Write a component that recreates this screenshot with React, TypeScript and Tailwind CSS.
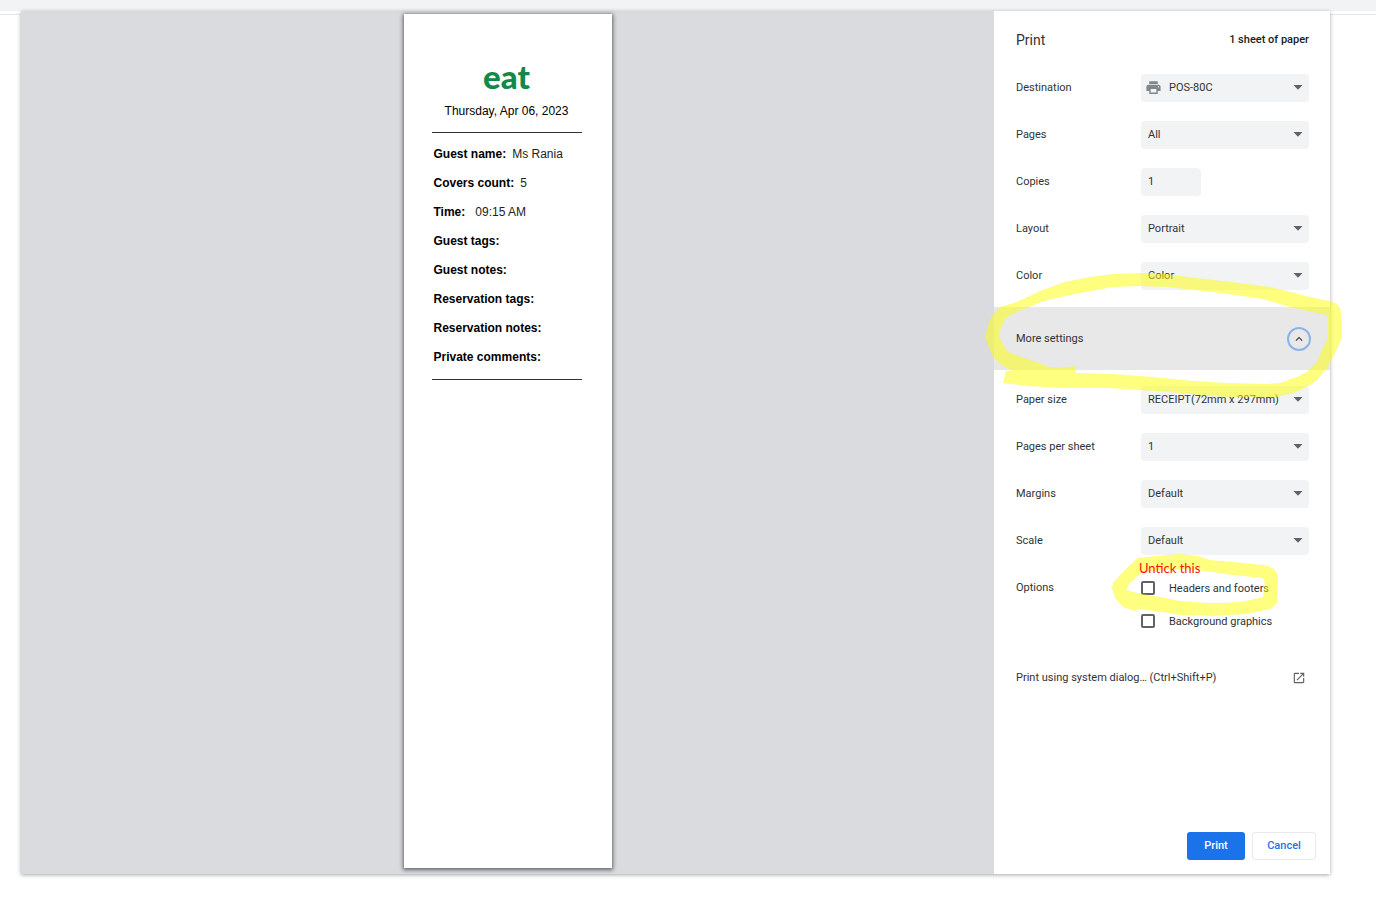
import { useState, type ReactNode } from "react";
import { MdExpandLess, MdExpandMore, MdOpenInNew, MdPrint } from "react-icons/md";

interface SelectRowProps {
  id: string;
  label: string;
  options: string[];
  icon?: ReactNode;
}

const RECEIPT_FIELDS = [
  { label: "Guest name:", value: "Ms Rania" },
  { label: "Covers count:", value: "5" },
  { label: "Time:", value: "09:15 AM", wide: true },
  { label: "Guest tags:" },
  { label: "Guest notes:" },
  { label: "Reservation tags:" },
  { label: "Reservation notes:" },
  { label: "Private comments:" },
];

function Row({ id, label, children }: { id: string; label: string; children: ReactNode }) {
  return (
    <div className="flex h-[47px] items-center pl-[22px] pr-[21px]">
      <label htmlFor={id} className="w-[125px] shrink-0 pt-0.5">{label}</label>
      {children}
    </div>
  );
}

function SelectRow({ id, label, options, icon }: SelectRowProps) {
  return (
    <Row id={id} label={label}>
      <div className="relative min-w-0 flex-1">
        <select
          id={id}
          className={`block h-7 w-full appearance-none rounded-sm bg-[#f1f3f4] pr-[27px] pt-0.5 ${icon ? "pl-7" : "pl-[7px]"}`}
        >
          {options.map((o) => (
            <option key={o}>{o}</option>
          ))}
        </select>
        {icon && <span className="pointer-events-none absolute left-1 top-[5px]">{icon}</span>}
        <svg viewBox="0 0 10 5" className="pointer-events-none absolute right-1.5 top-[11px] h-[5px] w-[10px]" fill="#5f6368">
          <path d="M.5 0h9L5 4.8z" />
        </svg>
      </div>
    </Row>
  );
}

function CheckOption({ label }: { label: string }) {
  return (
    <label className="flex h-[33px] items-center gap-3.5">
      <input
        type="checkbox"
        className="h-3.5 w-3.5 appearance-none rounded-[2px] border-2 border-[#5f6368] checked:bg-[#1a73e8]"
      />
      <span className="pt-1">{label}</span>
    </label>
  );
}

function Receipt() {
  return (
    <article className="w-52 bg-white pl-7 pr-[30px] pt-11 font-['Liberation_Sans',Arial,sans-serif] text-[12px] text-black shadow-[0_1px_4px_1px_rgba(0,0,0,0.55)]">
      <h1 className="text-center font-['Lato',sans-serif] text-[33px] font-black leading-9 text-[#118a48]">eat</h1>
      <p className="mt-2 text-center leading-[18px]">Thursday, Apr 06, 2023</p>
      <dl className="mt-3 border-y border-[#333] pb-2 pl-0.5 pt-1.5">
        {RECEIPT_FIELDS.map((f) => (
          <div key={f.label} className={`flex h-[29px] items-center ${f.wide ? "gap-2.5" : "gap-1.5"}`}>
            <dt className="font-bold">{f.label}</dt>
            <dd className="text-[#222]">{f.value}</dd>
          </div>
        ))}
      </dl>
    </article>
  );
}

/** Freehand marker strokes laid over the settings panel. */
function Highlights() {
  return (
    <svg
      viewBox="994 11 336 863"
      className="pointer-events-none absolute left-0 top-0 h-[863px] w-[336px] overflow-visible"
      fill="#ffff00"
      fillOpacity="0.5"
      fillRule="evenodd"
      aria-hidden="true"
    >
      <path d="M993 315L1000 307L1017 302L1040 291L1065 282L1090 277L1113 274L1140 273L1167 274L1187 277L1213 280L1240 283L1270 287L1287 291L1310 297L1333 302Q1341 306 1341 313L1342 320L1342 337L1338 347L1333 357L1327 368L1317 380L1307 387L1293 393L1277 397L1253 397L1227 397L1200 395L1170 392L1140 390L1107 388L1063 388L1030 386L1003 383L1006 371H1012L1000 364L992 355L986 340V332L990 320ZM1327 315L1328 323V338L1323 348L1317 362L1307 372L1297 377L1280 383L1267 384L1227 383L1193 381L1153 377L1113 374L1076 373L1075 366L1068 367H1050L1030 360L1008 352L1002 343L999 335L1002 325L1007 317L1023 309L1047 300L1080 293L1113 287L1140 286L1167 287L1213 292L1263 299L1290 307L1313 312Z" />
      <path d="M1113 583L1120 575L1130 565L1138 558L1157 556L1180 554L1197 556L1210 560L1243 563L1263 565Q1275 566 1278 577L1277 603L1270 609L1247 614L1213 616L1180 615L1163 612L1138 609L1135 611L1123 607L1115 598L1112 588ZM1126 590L1130 583L1140 574L1153 571L1180 569L1198 570L1233 575L1263 578L1265 584L1263 597L1247 601L1227 603H1207L1180 601L1160 597L1137 593Z" />
    </svg>
  );
}

export default function App() {
  const [expanded, setExpanded] = useState(true);
  const [copies, setCopies] = useState("1");

  return (
    <div className="flex min-h-screen flex-col bg-white font-['Roboto',sans-serif] text-[11px] text-[#303336]">
      <header className="h-[15px] border-b border-[#e8e8e8]">
        <div className="h-[11px] bg-[#f1f3f4]" />
      </header>

      <main className="relative -mt-1 mb-[33px] ml-[21px] mr-[46px] flex flex-1 shadow-[0_1px_4px_rgba(0,0,0,0.35)]">
        <section className="flex min-w-0 flex-1 justify-center bg-[#dadbdf] pb-[6px] pt-[3px]" aria-label="Preview">
          <Receipt />
        </section>

        <aside className="relative flex w-[336px] shrink-0 flex-col bg-white">
          <div className="flex h-[53px] items-center justify-between pl-[22px] pr-[21px] pt-1.5">
            <h2 className="text-[14px]">Print</h2>
            <span className="font-medium text-[#202124]">1 sheet of paper</span>
          </div>

          <SelectRow
            id="destination"
            label="Destination"
            options={["POS-80C", "Save as PDF"]}
            icon={<MdPrint className="h-[17px] w-[17px] text-[#80868b]" />}
          />
          <SelectRow id="pages" label="Pages" options={["All", "Custom"]} />
          <Row id="copies" label="Copies">
            <input
              id="copies"
              value={copies}
              onChange={(e) => setCopies(e.target.value)}
              className="h-7 w-[60px] rounded-sm bg-[#f1f3f4] px-[7px]"
            />
          </Row>
          <SelectRow id="layout" label="Layout" options={["Portrait", "Landscape"]} />
          <SelectRow id="color" label="Color" options={["Color", "Black and white"]} />

          <button
            type="button"
            onClick={() => setExpanded(!expanded)}
            aria-expanded={expanded}
            className="mb-1.5 mt-2 flex h-[63px] shrink-0 items-center justify-between bg-[#e8e8e8] pl-[22px] pr-[19px]"
          >
            <span className="pt-0.5">More settings</span>
            <span className="flex h-6 w-6 items-center justify-center rounded-full border-2 border-[#8ab4e8]">
              {expanded ? <MdExpandLess className="h-3.5 w-3.5" /> : <MdExpandMore className="h-3.5 w-3.5" />}
            </span>
          </button>

          {expanded && (
            <>
              <SelectRow id="paper-size" label="Paper size" options={["RECEIPT(72mm x 297mm)", "A4"]} />
              <SelectRow id="per-sheet" label="Pages per sheet" options={["1", "2", "4"]} />
              <SelectRow id="margins" label="Margins" options={["Default", "None", "Minimum"]} />
              <SelectRow id="scale" label="Scale" options={["Default", "Custom"]} />
              <div role="group" aria-labelledby="options-label" className="flex pl-[22px] pr-[21px] pt-[7px]">
                <span id="options-label" className="flex h-[33px] w-[125px] items-center pt-0.5">Options</span>
                <div>
                  <CheckOption label="Headers and footers" />
                  <CheckOption label="Background graphics" />
                </div>
              </div>
            </>
          )}

          <button type="button" className="mt-[25px] flex h-8 items-center justify-between pl-[22px] pr-6 text-left">
            Print using system dialog… (Ctrl+Shift+P)
            <MdOpenInNew className="h-3.5 w-3.5 text-[#5f6368]" />
          </button>

          <div className="mb-3.5 mt-auto flex justify-end gap-[7px] pr-3.5 font-medium">
            <button type="button" className="h-7 w-[58px] rounded-[3px] bg-[#1a73e8] text-white">Print</button>
            <button type="button" className="h-7 w-16 rounded-[3px] border border-[#e8eaed] text-[#1a73e8]">Cancel</button>
          </div>

          <Highlights />
          <span className="absolute left-[145px] top-[548px] whitespace-nowrap font-['Lato',sans-serif] text-[13px] leading-[18px] text-[#ff1010]">
            Untick this
          </span>
        </aside>
      </main>
    </div>
  );
}
